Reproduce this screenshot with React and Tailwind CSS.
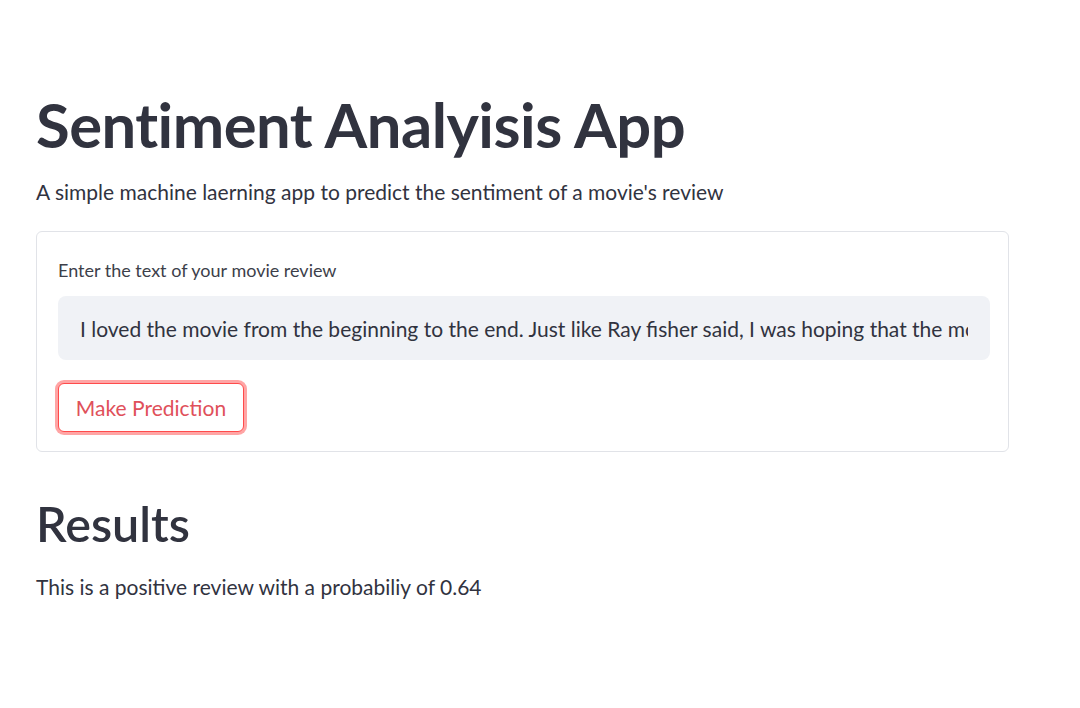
export default function App() {
  return (
    <div
      className="min-h-screen w-full bg-white text-[#31333f]"
      style={{ fontFamily: 'Lato, "Noto Sans", sans-serif' }}
    >
      <main className="pt-[88px] pl-[36px] pr-[71px]">
        <h1 className="text-[61.5px] font-bold leading-[72px] tracking-[-0.5px]">
          Sentiment Analyisis App
        </h1>
        <p className="mt-[18px] text-[21px] leading-[28px]">
          A simple machine laerning app to predict the sentiment of a movie's review
        </p>

        <form
          className="mt-[25px] rounded-md border border-[#e1e3e8] pl-[21px] pr-[18px] pt-[26px] pb-[19px]"
          onSubmit={(e) => e.preventDefault()}
        >
          <label className="block text-[18px] leading-[24px] text-[#3d3f4a]">
            Enter the text of your movie review
          </label>
          <input
            readOnly
            className="mt-[14px] h-[64px] w-full rounded-lg bg-[#f0f2f6] px-[22px] text-[21px] text-[#31333f] outline-none"
            defaultValue="I loved the movie from the beginning to the end. Just like Ray fisher said, I was hoping that the movie would never end. It was amazing."
          />
          <button
            type="submit"
            className="mt-[23px] h-[49px] w-[186px] rounded-md border border-[#ff4b4b] bg-white text-[21px] text-[#e0505a] ring-[3px] ring-[#ff4b4b]/50"
          >
            Make Prediction
          </button>
        </form>

        <h2 className="mt-[43px] text-[48.5px] font-semibold leading-[56px]">Results</h2>
        <p className="mt-[22px] text-[21px] leading-[28px]">
          This is a positive review with a probabiliy of 0.64
        </p>
      </main>
    </div>
  )
}
